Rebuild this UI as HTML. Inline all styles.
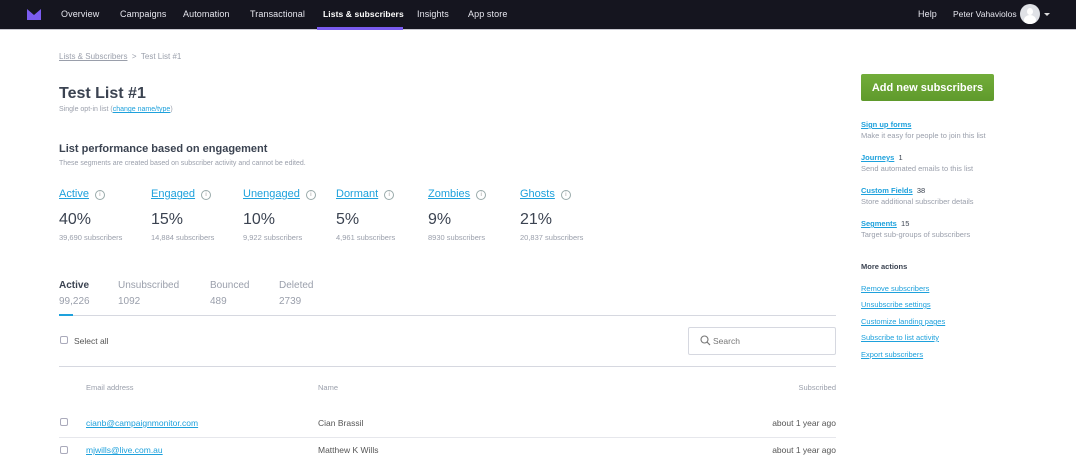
<!DOCTYPE html>
<html><head><meta charset="utf-8"><style>
*{margin:0;padding:0;box-sizing:border-box}
body{width:1076px;height:451px;overflow:hidden;background:#fff;font-family:"Liberation Sans",sans-serif;color:#3b4351;position:relative}
.a{position:absolute;white-space:nowrap}
.nav{position:absolute;left:0;top:0;width:1076px;height:30px;background:#15151f;border-bottom:1px solid #c8c8d0}
.nav .a{color:#e6e6ee;font-size:9px;top:9px;letter-spacing:0.1px}
.lnk{color:#1ea1dc;text-decoration:underline}
.g{color:#9a9fab}
.bl{font-weight:bold}
.info{display:inline-block;width:10px;height:10px;border:1px solid #9aa;border-radius:50%;font-size:6px;text-align:center;line-height:8px;color:#999;vertical-align:1px;margin-left:6px;text-decoration:none}
.cb{position:absolute;width:8px;height:8px;border:1px solid #aab;border-radius:2px}
.r{text-align:right}
</style></head><body>
<div class="nav">
<svg class="a" style="left:27px;top:9px" width="14" height="11" viewBox="0 0 14 11"><path d="M0 0 L7 6 L14 0 L14 11 L0 11Z" fill="#7b5cf0"/></svg>
<div class="a" style="left:61px">Overview</div>
<div class="a" style="left:120px">Campaigns</div>
<div class="a" style="left:183px">Automation</div>
<div class="a" style="left:250px">Transactional</div>
<div class="a bl" style="left:323px;color:#fff;font-size:8.5px">Lists &amp; subscribers</div>
<div class="a" style="left:417px">Insights</div>
<div class="a" style="left:468px">App store</div>
<div class="a" style="left:918px">Help</div>
<div class="a" style="left:953px;font-size:8.5px;letter-spacing:0">Peter Vahaviolos</div>
<div style="position:absolute;left:317px;top:27px;width:86px;height:3px;background:#7b5cf0"></div>
<div style="position:absolute;left:1020px;top:4px;width:20px;height:20px;border-radius:50%;background:#dfe1e6;overflow:hidden"><div style="position:absolute;left:7px;top:4px;width:6px;height:7px;border-radius:50%;background:#fff"></div><div style="position:absolute;left:4px;top:11px;width:12px;height:10px;border-radius:50%;background:#fff"></div></div>
<div class="a" style="left:1044px;top:13px;width:0;height:0;border-left:3px solid transparent;border-right:3px solid transparent;border-top:3px solid #ddd"></div>
</div>

<div class="a g" style="left:59px;top:52px;font-size:8px"><span style="text-decoration:underline">Lists &amp; Subscribers</span> &nbsp;&gt;&nbsp; Test List #1</div>
<div class="a bl" style="left:59px;top:85px;font-size:16px">Test List #1</div>
<div class="a g" style="left:59px;top:106px;font-size:7px">Single opt-in list (<span class="lnk">change name/type</span>)</div>
<div class="a bl" style="left:59px;top:143px;font-size:11px">List performance based on engagement</div>
<div class="a g" style="left:59px;top:160px;font-size:7px">These segments are created based on subscriber activity and cannot be edited.</div>

<div class="a" style="left:59px;top:188px;font-size:11px"><span class="lnk">Active</span><span class="info">i</span></div>
<div class="a" style="left:151px;top:188px;font-size:11px"><span class="lnk">Engaged</span><span class="info">i</span></div>
<div class="a" style="left:243px;top:188px;font-size:11px"><span class="lnk">Unengaged</span><span class="info">i</span></div>
<div class="a" style="left:336px;top:188px;font-size:11px"><span class="lnk">Dormant</span><span class="info">i</span></div>
<div class="a" style="left:428px;top:188px;font-size:11px"><span class="lnk">Zombies</span><span class="info">i</span></div>
<div class="a" style="left:520px;top:188px;font-size:11px"><span class="lnk">Ghosts</span><span class="info">i</span></div>

<div class="a" style="left:59px;top:211px;font-size:16px">40%</div>
<div class="a" style="left:151px;top:211px;font-size:16px">15%</div>
<div class="a" style="left:243px;top:211px;font-size:16px">10%</div>
<div class="a" style="left:336px;top:211px;font-size:16px">5%</div>
<div class="a" style="left:428px;top:211px;font-size:16px">9%</div>
<div class="a" style="left:520px;top:211px;font-size:16px">21%</div>
<div class="a g" style="left:59px;top:233px;font-size:7.5px">39,690 subscribers</div>
<div class="a g" style="left:151px;top:233px;font-size:7.5px">14,884 subscribers</div>
<div class="a g" style="left:243px;top:233px;font-size:7.5px">9,922 subscribers</div>
<div class="a g" style="left:336px;top:233px;font-size:7.5px">4,961 subscribers</div>
<div class="a g" style="left:428px;top:233px;font-size:7.5px">8930 subscribers</div>
<div class="a g" style="left:520px;top:233px;font-size:7.5px">20,837 subscribers</div>

<div class="a bl" style="left:59px;top:280px;font-size:10px">Active</div>
<div class="a g" style="left:118px;top:280px;font-size:10px">Unsubscribed</div>
<div class="a g" style="left:210px;top:280px;font-size:10px">Bounced</div>
<div class="a g" style="left:279px;top:280px;font-size:10px">Deleted</div>
<div class="a g" style="left:59px;top:296px;font-size:10px">99,226</div>
<div class="a g" style="left:118px;top:296px;font-size:10px">1092</div>
<div class="a g" style="left:210px;top:296px;font-size:10px">489</div>
<div class="a g" style="left:279px;top:296px;font-size:10px">2739</div>
<div class="a" style="left:59px;top:315px;width:777px;height:1px;background:#d6d8e0"></div>
<div class="a" style="left:59px;top:314px;width:14px;height:2px;background:#1ea1dc"></div>

<div class="cb" style="left:60px;top:336px"></div>
<div class="a" style="left:74px;top:336px;font-size:8.5px;color:#555">Select all</div>
<div class="a" style="left:688px;top:327px;width:148px;height:28px;border:1px solid #d6d8e0;border-radius:2px"></div>
<svg class="a" style="left:700px;top:335px" width="11" height="11" viewBox="0 0 11 11"><circle cx="4.5" cy="4.5" r="3.5" fill="none" stroke="#777" stroke-width="1.1"/><path d="M7 7 L10 10" stroke="#777" stroke-width="1.2"/></svg>
<div class="a" style="left:713px;top:336px;font-size:8.5px;color:#777">Search</div>
<div class="a" style="left:59px;top:366px;width:777px;height:1px;background:#d6d8e0"></div>

<div class="a g" style="left:86px;top:383px;font-size:7.5px">Email address</div>
<div class="a g" style="left:318px;top:383px;font-size:7.5px">Name</div>
<div class="a g r" style="right:240px;top:383px;font-size:7.5px">Subscribed</div>

<div class="cb" style="left:60px;top:418px"></div>
<div class="a lnk" style="left:86px;top:418px;font-size:8.5px">cianb@campaignmonitor.com</div>
<div class="a" style="left:318px;top:418px;font-size:8.5px;color:#555">Cian Brassil</div>
<div class="a r" style="right:240px;top:418px;font-size:8.5px;color:#555">about 1 year ago</div>
<div class="a" style="left:59px;top:437px;width:777px;height:1px;background:#e6e7ec"></div>
<div class="cb" style="left:60px;top:446px"></div>
<div class="a lnk" style="left:86px;top:445px;font-size:8.5px">mjwills@live.com.au</div>
<div class="a" style="left:318px;top:445px;font-size:8.5px;color:#555">Matthew K Wills</div>
<div class="a r" style="right:240px;top:445px;font-size:8.5px;color:#555">about 1 year ago</div>

<div class="a" style="left:861px;top:74px;width:133px;height:27px;background:linear-gradient(#72ad3a,#5f9a2c);border-radius:2px;color:#fff;font-weight:bold;font-size:11px;text-align:center;line-height:28px">Add new subscribers</div>
<div class="a lnk bl" style="left:861px;top:120px;font-size:7.5px">Sign up forms</div>
<div class="a g" style="left:861px;top:131px;font-size:7.5px">Make it easy for people to join this list</div>
<div class="a" style="left:861px;top:153px;font-size:7.5px"><span class="lnk bl">Journeys</span>&nbsp; 1</div>
<div class="a g" style="left:861px;top:164px;font-size:7.5px">Send automated emails to this list</div>
<div class="a" style="left:861px;top:186px;font-size:7.5px"><span class="lnk bl">Custom Fields</span>&nbsp; 38</div>
<div class="a g" style="left:861px;top:197px;font-size:7.5px">Store additional subscriber details</div>
<div class="a" style="left:861px;top:219px;font-size:7.5px"><span class="lnk bl">Segments</span>&nbsp; 15</div>
<div class="a g" style="left:861px;top:230px;font-size:7.5px">Target sub-groups of subscribers</div>
<div class="a bl" style="left:861px;top:262px;font-size:7.5px">More actions</div>
<div class="a lnk" style="left:861px;top:284px;font-size:7.5px">Remove subscribers</div>
<div class="a lnk" style="left:861px;top:300px;font-size:7.5px">Unsubscribe settings</div>
<div class="a lnk" style="left:861px;top:317px;font-size:7.5px">Customize landing pages</div>
<div class="a lnk" style="left:861px;top:333px;font-size:7.5px">Subscribe to list activity</div>
<div class="a lnk" style="left:861px;top:350px;font-size:7.5px">Export subscribers</div>
</body></html>
